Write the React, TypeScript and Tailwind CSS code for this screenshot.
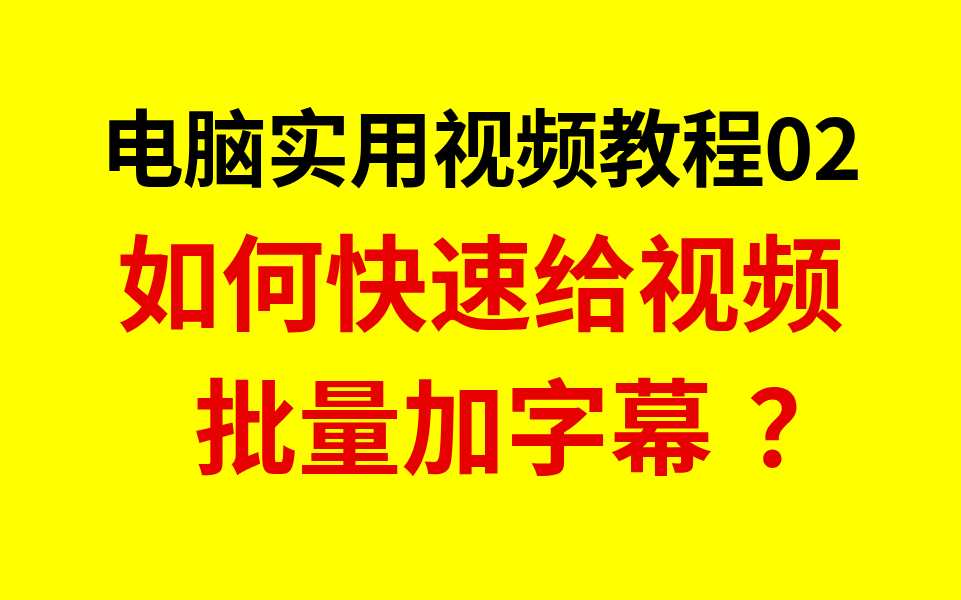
import React from 'react';

const font = { fontFamily: '"Noto Sans CJK SC", "Noto Sans", sans-serif' };

export default function App() {
  return (
    <div
      className="w-[961px] h-[600px] bg-[#ffff00] flex flex-col items-center font-bold leading-none"
      style={font}
    >
      <h1 className="mt-[102px] text-[84px] text-black tracking-[-1px]">电脑实用视频教程02</h1>
      <h2 className="mt-[40px] text-[104px] text-[#e60000]">如何快速给视频</h2>
      <h2 className="mt-[40px] text-[104px] text-[#e60000] ml-[84px]">
        批量加字幕<span className="ml-[34px]">？</span>
      </h2>
    </div>
  );
}
